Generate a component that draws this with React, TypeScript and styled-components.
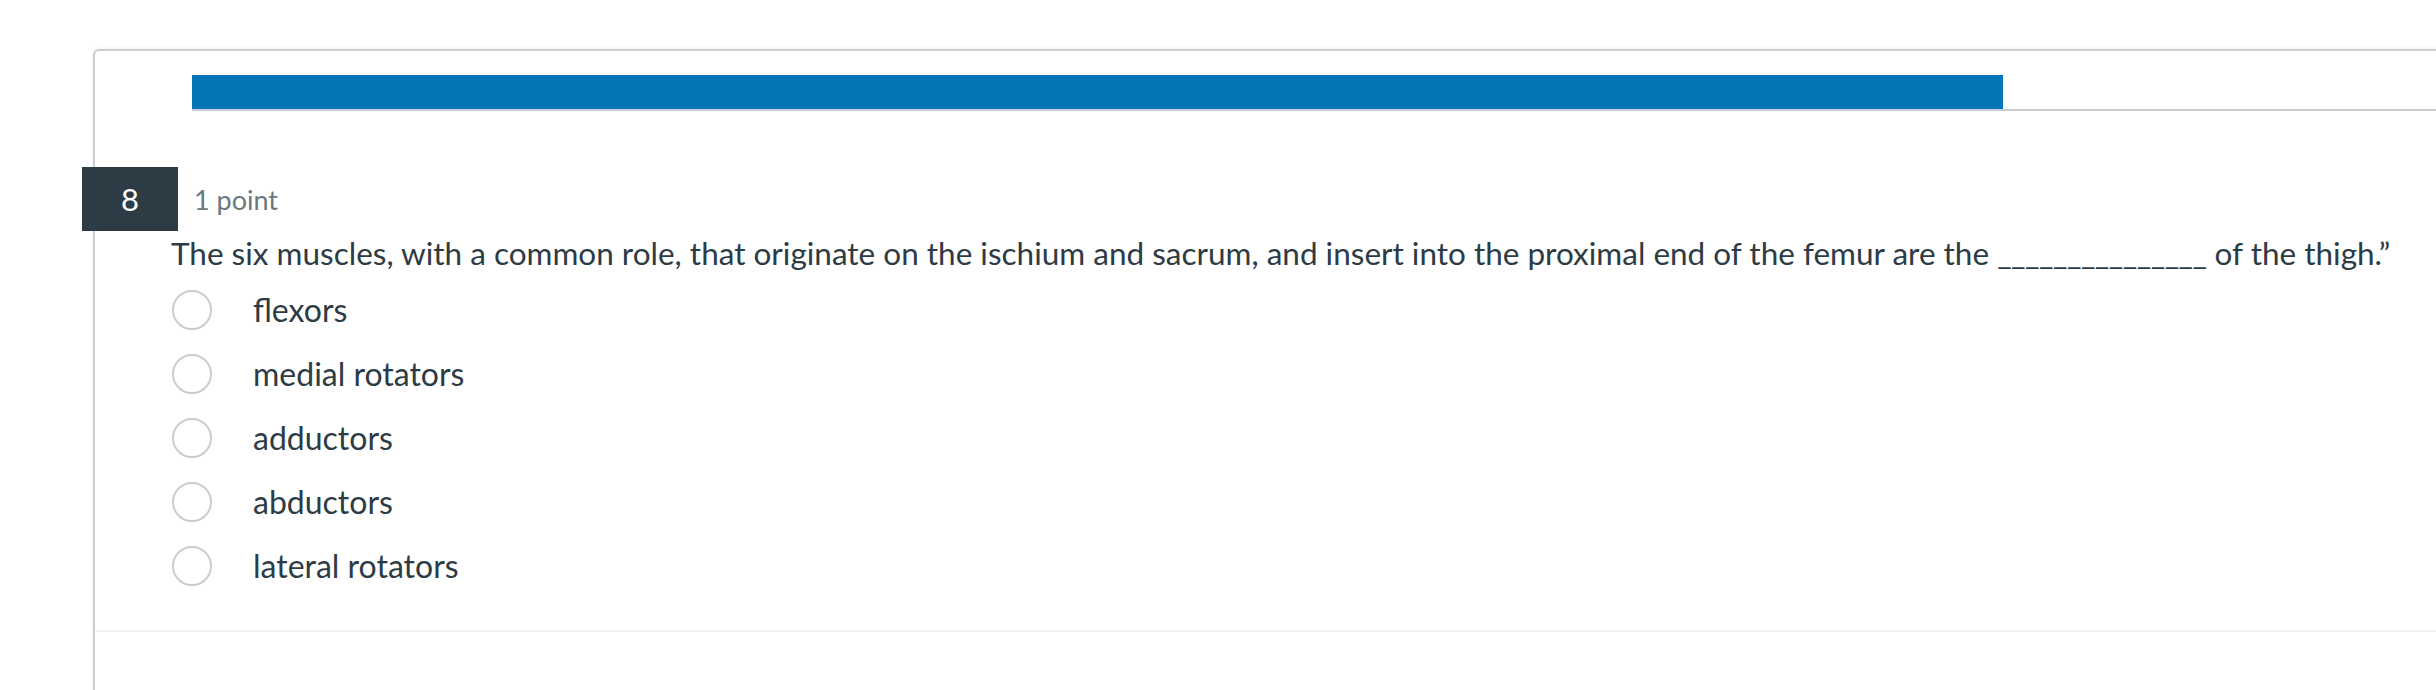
import React from 'react'
import styled, { createGlobalStyle } from 'styled-components'

const colors = {
  ink: '#2d3b45',
  muted: '#6b7780',
  brand: '#0374b5',
  line: '#c7cdd1',
  faint: '#f2f3f4',
}

const answers = ['flexors', 'medial rotators', 'adductors', 'abductors', 'lateral rotators']

const App = () => {
  return (
    <>
      <GlobalStyle />
      <StyledPage>
        <StyledCard>
          <StyledProgressTrack>
            <StyledProgressFill $width={1811} />
          </StyledProgressTrack>
          <StyledQuestionHeader>
            <StyledNumberBadge>{`8`}</StyledNumberBadge>
            <StyledPoints>{`1 point`}</StyledPoints>
          </StyledQuestionHeader>
          <StyledQuestionText>
            {`The six muscles, with a common role, that originate on the ischium and sacrum, and insert into the proximal end of the femur are the `}
            <StyledBlank>{`_______________`}</StyledBlank>
            {` of the thigh.”`}
          </StyledQuestionText>
          <StyledAnswerList>
            {answers.map((answer) => (
              <StyledAnswerRow key={answer}>
                <StyledRadio type="radio" name="q8" aria-label={answer} />
                <StyledAnswerLabel>{answer}</StyledAnswerLabel>
              </StyledAnswerRow>
            ))}
          </StyledAnswerList>
          <StyledFooterRule />
        </StyledCard>
      </StyledPage>
    </>
  )
}

const GlobalStyle = createGlobalStyle`
  html, body {
    margin: 0;
    padding: 0;
    background: #ffffff;
    overflow: hidden;
  }
  body {
    font-family: "Lato", "Liberation Sans", sans-serif;
    color: ${colors.ink};
  }
`

const StyledPage = styled.div`
  width: 2436px;
  height: 690px;
  padding: 49px 0 0 93px;
  box-sizing: border-box;
  overflow: hidden;
`

const StyledCard = styled.div`
  margin-right: -40px;
  min-height: 700px;
  border: 2px solid ${colors.line};
  border-radius: 6px;
  box-shadow: 0 -1px 3px rgba(0, 0, 0, 0.06);
  background: #ffffff;
  padding-top: 24px;
`

const StyledProgressTrack = styled.div`
  margin-left: 97px;
  height: 34px;
  border-bottom: 2px solid ${colors.line};
`

const StyledProgressFill = styled.div<{ $width: number }>`
  width: ${(p) => p.$width}px;
  height: 100%;
  background: ${colors.brand};
`

const StyledQuestionHeader = styled.div`
  display: flex;
  align-items: center;
  margin-top: 56px;
  margin-left: -13px;
  height: 64px;
`

const StyledNumberBadge = styled.div`
  display: flex;
  align-items: center;
  justify-content: center;
  width: 96px;
  height: 64px;
  background: ${colors.ink};
  color: #ffffff;
  font-size: 31px;
`

const StyledPoints = styled.span`
  margin-left: 16px;
  margin-top: 1px;
  font-size: 27px;
  color: ${colors.muted};
`

const StyledQuestionText = styled.p`
  margin: 0 0 2px 76px;
  font-size: 31.5px;
  line-height: 45px;
  white-space: nowrap;
`

const StyledBlank = styled.span`
  letter-spacing: -0.5px;
`

const StyledAnswerList = styled.div`
  display: flex;
  flex-direction: column;
  margin-left: 77px;
`

const StyledAnswerRow = styled.label`
  display: flex;
  align-items: center;
  height: 64px;
`

const StyledRadio = styled.input`
  appearance: none;
  margin: 0;
  width: 40px;
  height: 40px;
  border: 2px solid ${colors.line};
  border-radius: 50%;
  background: #ffffff;
  box-sizing: border-box;
`

const StyledAnswerLabel = styled.span`
  margin-left: 41px;
  font-size: 32px;
  line-height: 36px;
`

const StyledFooterRule = styled.div`
  margin-top: 32px;
  height: 2px;
  background: ${colors.faint};
`

export default App
